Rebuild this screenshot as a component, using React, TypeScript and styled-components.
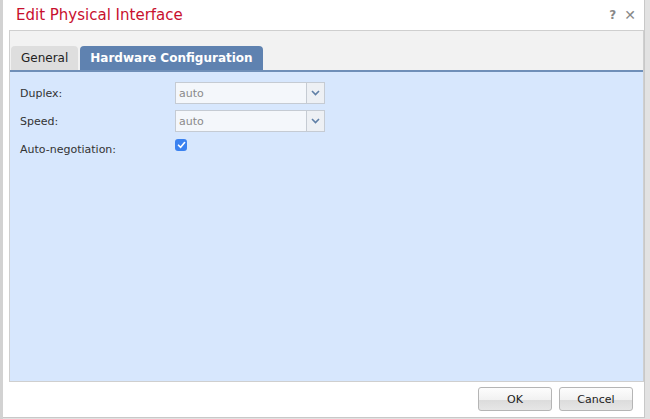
import styled, { createGlobalStyle } from "styled-components";

const GlobalStyle = createGlobalStyle`
    html, body {
        margin: 0;
        padding: 0;
        background: #e4e4e4;
        font-family: "DejaVu Sans", Verdana, sans-serif;
    }
`;

const Page = styled.div`
    width: 650px;
    height: 419px;
    display: flex;
    background: #e2e2e2;
    overflow: hidden;
`;

const Gutter = styled.div`
    width: 3px;
    flex-shrink: 0;
    background: #d2d2d2;
`;

const Dialog = styled.div`
    width: 642px;
    height: 418px;
    background: #ffffff;
    border-right: 1px solid #c8c8c8;
    border-bottom: 1px solid #c8c8c8;
    display: flex;
    flex-direction: column;
    box-sizing: border-box;
`;

const TitleBar = styled.div`
    height: 30px;
    display: flex;
    align-items: center;
    justify-content: space-between;
    padding: 0 8px 0 13px;
`;

const Title = styled.h1`
    margin: 0;
    font-size: 15px;
    font-weight: normal;
    color: #c8102e;
`;

const TitleTools = styled.div`
    display: flex;
    gap: 8px;
    align-items: center;
    color: #888;
    font-size: 12px;
    font-weight: bold;
`;

const Close = styled.span`
    font-size: 14px;
    font-weight: normal;
`;

const Frame = styled.div`
    margin: 0 0 0 6px;
    height: 352px;
    border: 1px solid #cfcfcf;
    background: #f2f2f2;
    display: flex;
    flex-direction: column;
    box-sizing: border-box;
`;

const TabStrip = styled.div`
    display: flex;
    gap: 2px;
    padding: 15px 0 0 1px;
    border-bottom: 2px solid #6f8fb8;
`;

const Tab = styled.div<{ active?: boolean }>`
    height: 24px;
    padding: 0 10px;
    display: flex;
    align-items: center;
    border-radius: 4px 4px 0 0;
    font-size: 12px;
    font-weight: ${(p) => (p.active ? "bold" : "normal")};
    color: ${(p) => (p.active ? "#ffffff" : "#222")};
    background: ${(p) => (p.active ? "#5f82b0" : "#dedede")};
`;

const Content = styled.div`
    flex: 1;
    background: #d7e7fd;
    padding: 10px 0 0 10px;
    display: flex;
    flex-direction: column;
    gap: 6px;
`;

const Row = styled.div`
    display: flex;
    align-items: center;
    height: 22px;
`;

const Label = styled.div`
    width: 155px;
    font-size: 11px;
    color: #333;
    padding-top: 1px;
`;

const Select = styled.div`
    width: 150px;
    height: 22px;
    box-sizing: border-box;
    border: 1px solid #c5cbd3;
    background: #f4f7fb;
    display: flex;
    align-items: stretch;
`;

const SelectValue = styled.div`
    flex: 1;
    display: flex;
    align-items: center;
    padding-left: 3px;
    font-size: 11px;
    color: #8a8a8a;
`;

const SelectArrow = styled.div`
    width: 17px;
    border-left: 1px solid #c5cbd3;
    background: #edf0f4;
    display: flex;
    align-items: center;
    justify-content: center;
`;

const Check = styled.div`
    width: 12px;
    height: 12px;
    border-radius: 3px;
    background: #3b82f0;
    display: flex;
    align-items: center;
    justify-content: center;
    margin-top: -8px;
`;

const Footer = styled.div`
    flex: 1;
    display: flex;
    justify-content: flex-end;
    align-items: center;
    gap: 7px;
    padding: 0 11px 1px 0;
`;

const Button = styled.button`
    width: 74px;
    height: 24px;
    border: 1px solid #b5b5b5;
    border-radius: 3px;
    background: linear-gradient(#fdfdfd 0%, #f1f1f1 55%, #dcdcdc 56%, #e6e6e6 100%);
    font-family: "DejaVu Sans", Verdana, sans-serif;
    font-size: 11px;
    color: #222;
    padding: 0;
`;

const Chevron = () => (
    <svg width="9" height="6" viewBox="0 0 9 6">
        <path d="M1 1 L4.5 4.5 L8 1" fill="none" stroke="#5f7fa6" strokeWidth="1.6" />
    </svg>
);

const CheckMark = () => (
    <svg width="9" height="8" viewBox="0 0 9 8">
        <path d="M1.5 4.2 L3.6 6.3 L7.6 1.5" fill="none" stroke="#ffffff" strokeWidth="1.6" strokeLinecap="round" />
    </svg>
);

const App = () => {
    return (
        <>
            <GlobalStyle />
            <Page>
                <Gutter />
                <Dialog>
                    <TitleBar>
                        <Title>Edit Physical Interface</Title>
                        <TitleTools>
                            <span>?</span>
                            <Close>✕</Close>
                        </TitleTools>
                    </TitleBar>
                    <Frame>
                        <TabStrip>
                            <Tab>General</Tab>
                            <Tab active>Hardware Configuration</Tab>
                        </TabStrip>
                        <Content>
                            <Row>
                                <Label>Duplex:</Label>
                                <Select>
                                    <SelectValue>auto</SelectValue>
                                    <SelectArrow><Chevron /></SelectArrow>
                                </Select>
                            </Row>
                            <Row>
                                <Label>Speed:</Label>
                                <Select>
                                    <SelectValue>auto</SelectValue>
                                    <SelectArrow><Chevron /></SelectArrow>
                                </Select>
                            </Row>
                            <Row>
                                <Label>Auto-negotiation:</Label>
                                <Check><CheckMark /></Check>
                            </Row>
                        </Content>
                    </Frame>
                    <Footer>
                        <Button>OK</Button>
                        <Button>Cancel</Button>
                    </Footer>
                </Dialog>
            </Page>
        </>
    );
};

export default App;
